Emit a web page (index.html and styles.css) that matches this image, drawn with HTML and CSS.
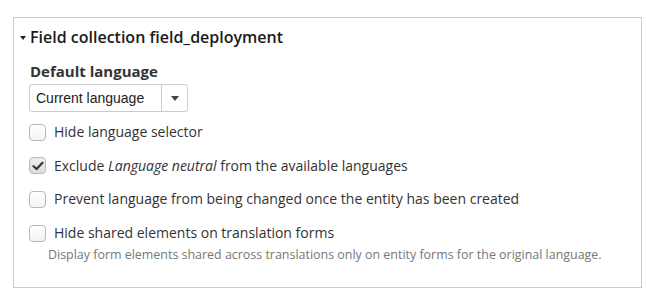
FILE: index.html
```html
<!DOCTYPE html>
<html>
<head>
    <meta charset="UTF-8">
    <title>Field collection field_deployment</title>
    <link rel="stylesheet" href="styles.css">
</head>
<body>

    <div class="fieldset">
        <div class="fieldset_title">
            <span class="toggle"></span>Field collection field_deployment
        </div>

        <div class="form_item">
            <label class="item_label">Default language</label>
            <div class="select">
                <span class="select_text">Current language</span>
                <span class="select_arrow"></span>
            </div>
        </div>

        <div class="check_list">
            <div class="check_row">
                <span class="checkbox"></span>
                <span class="check_label">Hide language selector</span>
            </div>
            <div class="check_row">
                <span class="checkbox checked">
                    <svg width="12" height="10" viewBox="0 0 12 10"><path d="M1.5 5.2 L4.6 8 L10.5 1.8" fill="none" stroke="#333" stroke-width="2.2" stroke-linecap="round" stroke-linejoin="round"/></svg>
                </span>
                <span class="check_label">Exclude <em>Language neutral</em> from the available languages</span>
            </div>
            <div class="check_row">
                <span class="checkbox"></span>
                <span class="check_label">Prevent language from being changed once the entity has been created</span>
            </div>
            <div class="check_row last_row">
                <span class="checkbox"></span>
                <span class="check_label">Hide shared elements on translation forms</span>
            </div>
            <div class="description">Display form elements shared across translations only on entity forms for the original language.</div>
        </div>
    </div>

</body>
</html>
```

FILE: styles.css
```css
*{
    margin: 0;
    padding: 0;
    box-sizing: border-box;
}
body{
    background: #fff;
    font-family: "Open Sans", "DejaVu Sans", sans-serif;
    color: #333;
}
.fieldset{
    width: 629px;
    height: 271px;
    margin: 17px 0 0 13px;
    border: 1px solid #ccc;
    padding: 8px 16px 0 16px;
}
.fieldset_title{
    display: flex;
    align-items: center;
    height: 22px;
    font-size: 16px;
    font-weight: 600;
    color: #1a1a1a;
}
.toggle{
    width: 0;
    height: 0;
    margin: 2px 4px 0 -10px;
    border-left: 3px solid transparent;
    border-right: 3px solid transparent;
    border-top: 4px solid #222;
}
.form_item{
    margin-top: 14px;
}
.item_label{
    display: block;
    font-size: 15px;
    font-weight: 700;
    line-height: 18px;
    color: #333;
    margin-bottom: 4px;
}
.select{
    display: flex;
    width: 159px;
    height: 28px;
    margin-left: -1px;
    border: 1px solid #ccc;
    border-radius: 3px;
    background: #fff;
}
.select_text{
    flex: 1;
    padding-left: 6px;
    font-family: "Liberation Sans", Arial, sans-serif;
    font-size: 14px;
    line-height: 26px;
    color: #222;
    border-right: 1px solid #ccc;
}
.select_arrow{
    width: 25px;
    display: flex;
    align-items: center;
    justify-content: center;
}
.select_arrow::after{
    content: "";
    border-left: 4px solid transparent;
    border-right: 4px solid transparent;
    border-top: 5px solid #444;
}
.check_list{
    margin-top: 10px;
}
.check_row{
    display: flex;
    align-items: center;
    height: 20px;
    margin-bottom: 13.7px;
}
.check_row.last_row{
    margin-bottom: 4px;
}
.checkbox{
    width: 17px;
    height: 17px;
    margin-left: -1px;
    border: 1px solid #b8b8b8;
    border-radius: 4px;
    background: linear-gradient(#fff, #f4f4f4);
    display: flex;
    align-items: center;
    justify-content: center;
}
.checkbox.checked{
    background: linear-gradient(#eee, #ddd);
}
.check_label{
    margin-left: 8px;
    font-size: 14px;
    line-height: 20px;
    color: #333;
}
.check_label em{
    font-style: italic;
}
.description{
    margin-left: 18px;
    font-size: 12.45px;
    line-height: 16px;
    color: #777;
}
```
